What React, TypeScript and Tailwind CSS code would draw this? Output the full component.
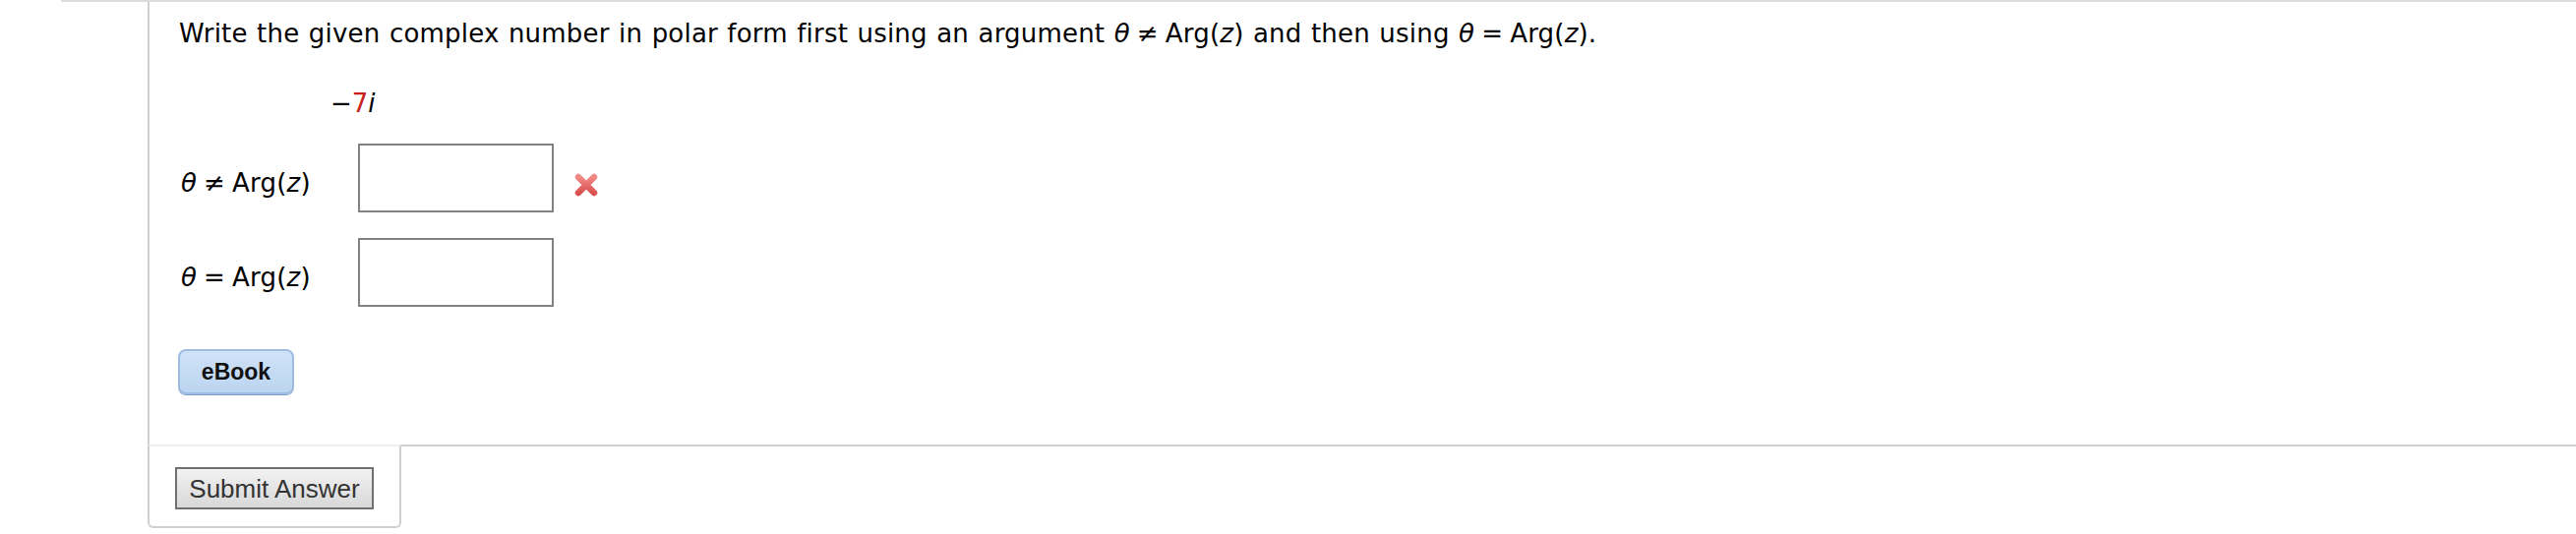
function MathLabel({ rel }: { rel: string }) {
  return (
    <span>
      <i>θ</i>
      <span className="mx-[7px]">{rel}</span>
      Arg(<i>z</i>)
    </span>
  );
}

function WrongMark() {
  return (
    <svg width="26" height="26" viewBox="0 0 26 26" className="ml-[20px] mt-[14px]">
      <defs>
        <linearGradient id="xg" x1="0" y1="0" x2="0" y2="1">
          <stop offset="0" stopColor="#f28a88" />
          <stop offset="1" stopColor="#d9514f" />
        </linearGradient>
      </defs>
      <path d="M5 5 L21 21 M21 5 L5 21" stroke="url(#xg)" strokeWidth={6.5} strokeLinecap="round" fill="none" />
    </svg>
  );
}

function AnswerRow({ rel, wrong }: { rel: string; wrong?: boolean }) {
  return (
    <div className="flex h-[70px] items-center">
      <div className="mt-[10px] w-[182px] pl-[2px] tracking-[0.2px]">
        <MathLabel rel={rel} />
      </div>
      <input type="text" className="h-[70px] w-[199px] border-2 border-[#828282] bg-white outline-none" />
      {wrong && <WrongMark />}
    </div>
  );
}

export default function App() {
  return (
    <div className="min-h-[543px] w-full bg-white text-[26px] leading-[30px] text-black [font-family:'DejaVu_Sans',Verdana,sans-serif]">
      <div className="ml-[62px] h-[2px] bg-[#dcdcdc]" />
      <div className="ml-[150px]">
        <div className="border-l-2 border-[#d0d0d0] pb-[51px] pl-[30px] pt-[17px]">
          <p className="whitespace-nowrap tracking-[0.2px] [word-spacing:1px]">
            Write the given complex number in polar form first using an argument <MathLabel rel="≠" /> and then using{" "}
            <MathLabel rel="=" />.
          </p>
          <div className="ml-[154px] mt-[41px]">
            −<span className="text-[#c9211e]">7</span>
            <i>i</i>
          </div>
          <div className="mt-[26px]">
            <AnswerRow rel="≠" wrong />
          </div>
          <div className="mt-[26px]">
            <AnswerRow rel="=" />
          </div>
          <button className="-ml-px mt-[43px] h-[46px] w-[118px] rounded-[8px] border-2 border-[#9dbde3] bg-gradient-to-b from-[#cfe2f7] to-[#bcd5f0] text-[23px] leading-none font-bold text-[#111] shadow-[0_1px_0_#7f9fc8] [font-family:'Liberation_Sans',Arial,sans-serif]">
            eBook
          </button>
        </div>
        <div className="flex">
          <div className="h-[85px] w-[258px] rounded-b-[6px] border-x-2 border-b-2 border-t-2 border-[#cfcfcf] border-t-[#eeeeee] pl-[26px] pt-[21px]">
            <button className="h-[43px] w-[202px] border-2 border-[#707070] bg-gradient-to-b from-[#f2f2f2] to-[#d8d8d8] text-[26px] leading-none text-[#333] [font-family:'Liberation_Sans',Arial,sans-serif]">
              Submit Answer
            </button>
          </div>
          <div className="h-[2px] flex-1 bg-[#d0d0d0]" />
        </div>
      </div>
    </div>
  );
}
